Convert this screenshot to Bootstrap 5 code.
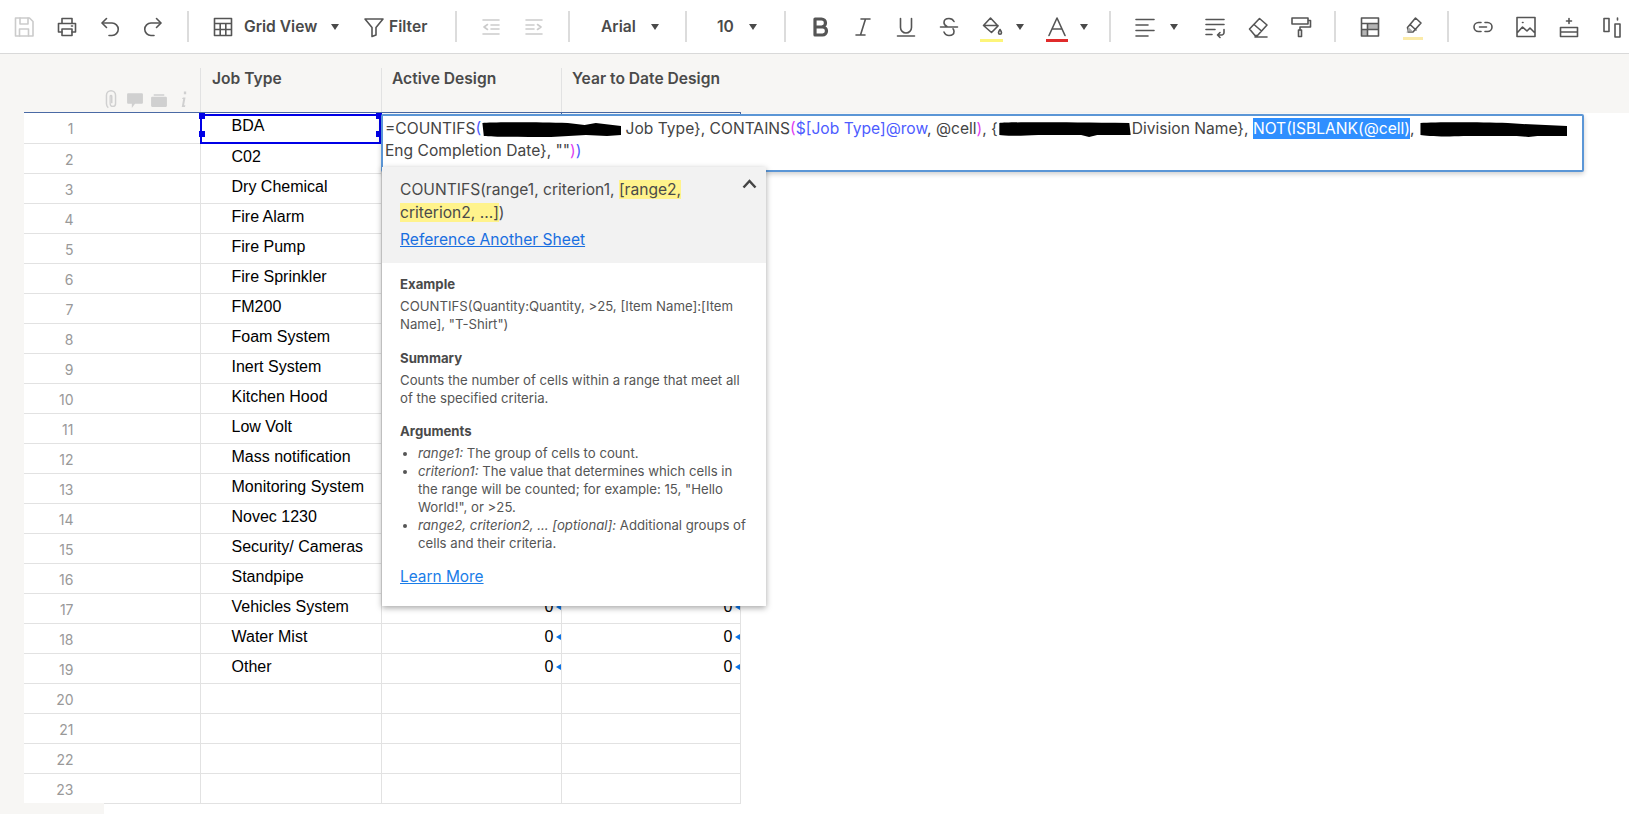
<!DOCTYPE html>
<html lang="en">
<head>
<meta charset="utf-8">
<title>Sheet</title>
<link href="https://cdn.jsdelivr.net/npm/bootstrap@5.3.0/dist/css/bootstrap.min.css" rel="stylesheet">
<style>
html,body{height:100%;overflow:hidden;background:#fff}
body{font-family:Inter,"Liberation Sans",sans-serif;color:#444}
.tbar{height:54px;padding-left:2px;border-bottom:1px solid #d9d9d9;background:#fff;overflow:hidden}
.tool{width:43px;flex:none;display:flex;align-items:center;justify-content:center}
.tool svg{width:24px;height:24px;fill:none;stroke:#555;stroke-width:1.6;stroke-linecap:round;stroke-linejoin:round;overflow:visible}
.tool.off svg{stroke:#cbcbcb}
.fw31{width:31px}
.sepr{width:2px;height:31px;background:#dcdcdc;flex:none}
.caretm{width:10px;height:10px;flex:none;display:flex;align-items:center;justify-content:center}
.caretm::before{content:"";border-left:4px solid transparent;border-right:4px solid transparent;border-top:6px solid #4a4a4a}
.lbl{flex:none;font-weight:600;font-size:15.6px;white-space:nowrap;color:#4a4a4a}
.w73{width:73px}.w39{width:39px}.w34{width:34px}.w17{width:17px}
.ml1{margin-left:1px}.ml2{margin-left:2px}.ml3{margin-left:3px}.ml10{margin-left:10px}.ml12{margin-left:12px}.ml13{margin-left:13px}.ml14{margin-left:14px}.ml15{margin-left:15px}.ml18{margin-left:18px}.ml20{margin-left:20px}.ml25{margin-left:25px}.ml26{margin-left:26px}.ml27{margin-left:27px}.ml30{margin-left:30px}.ml31{margin-left:31px}
.stage{height:760px;background:#fff;overflow:hidden}
.headband{background:#f7f6f4;height:59px}
.gutter{width:24px;background:#f7f6f4;flex:none}
.hcorner{width:176px;height:59px;position:relative;flex:none}
.hcol{width:181px;height:45px;margin-top:14px;padding:0 0 0 11px;border-left:1px solid #e2e2e2;font-weight:600;font-size:15.6px;color:#4a4a4a;flex:none}
.hcol2{width:180px;padding-left:10px}
.hlabel{height:22px;line-height:22px}
.hicons{position:absolute;right:8px;bottom:4px;display:flex;gap:6px;align-items:center}
.hicons svg{width:18px;height:19px;fill:#d0d0d0;stroke:none}
.hrule{position:absolute;left:24px;top:58px;width:717px;height:2px;background:#4a6aa5}
.sheet{table-layout:fixed;width:716px;margin:0;border-collapse:collapse}
.sheet td{height:30px;padding:0;border:0;border-bottom:1px solid #e2e2e2;border-left:1px solid #e2e2e2;background:#fff;font-family:"Liberation Sans",sans-serif;font-size:16px;color:#000;vertical-align:top;line-height:26px;position:relative}
.sheet td:first-child{border-left:0;padding:3px 126px 0 0;text-align:right;font-family:Inter,"Liberation Sans",sans-serif;color:#999;font-size:14px;line-height:26px}
.sheet td:last-child{border-right:1px solid #e2e2e2}
.sheet td.jt{padding-left:31px}
.sheet td.num{text-align:right;padding-right:7px}
.sheet td.tri::after{content:"";position:absolute;right:0;top:10px;border-top:3.5px solid transparent;border-bottom:3.5px solid transparent;border-right:5px solid #0b73e6}
.w176{width:176px}.w181{width:181px}.w180{width:180px}.w179{width:179px}
.foot-strip{height:11px;width:80px;background:#f7f6f4}
.gridwrap{height:690px}
.selcell{position:absolute;left:200px;top:60px;width:181px;height:30px;border:2px solid #0000e6}
.selcell i{position:absolute;width:6px;height:6px;background:#0000e6}
.h1{left:-3px;top:-3px}.h2{right:-3px;top:-3px}.h3{left:-3px;bottom:-3px}.h4{right:-3px;bottom:-3px}
.fbar{position:absolute;left:381px;top:60px;width:1203px;height:58px;background:#fff;border:2px solid #5b96d6;border-radius:2px;padding:2px 0 0 2px;font-family:Inter,"Liberation Sans",sans-serif;font-size:15.6px;color:#444;box-shadow:0 2px 5px rgba(0,0,0,.2)}
.fbar .ln{white-space:nowrap;height:22px;line-height:22px}
.scrib{display:inline-block;vertical-align:-3px;height:15px;fill:#000}
.s1{width:140px}.s2{width:134px}.s3{width:148px}
.pa{color:#4d5cff}.mg{color:#e13df0}
.hit{background:#2f8fff;color:#fff;display:inline-block;height:21px;line-height:21px}
.hintbox{position:absolute;left:382px;top:113px;width:384px;height:439px;background:#fff;box-shadow:0 2px 6px rgba(0,0,0,.35);font-family:Inter,"Liberation Sans",sans-serif;color:#555;z-index:2}
.hinthead{background:#f2f2f2;height:96px;padding:11px 30px 0 18px;font-size:15.6px;line-height:23px;position:relative;color:#4a4a4a}
.opt{background:#fff38c}
.chev{position:absolute;right:9px;top:12px;width:15px;height:10px;fill:none;stroke:#444;stroke-width:2.5}
.reflink{display:block;margin-top:4px;color:#1a6fe0;text-decoration:underline}
.hintbody{padding:12px 18px 0;font-size:13.2px;line-height:18px}
.ttl{font-weight:700;color:#4a4a4a;margin-top:15.5px;margin-bottom:4px}
.ttl.first{margin-top:0}
.hintbody ul{margin:0;padding-left:18px}
.learn{display:block;margin-top:14px;font-size:15.4px;line-height:22px;color:#1a7de8;text-decoration:underline}
</style>
</head>
<body>
<div class="tbar d-flex align-items-center">
  <span class="tool off"><svg viewBox="0 0 24 24"><path d="M3.500 3h14l3.500 3.500V21H3.500z"/><path d="M8 3v6h8V3M7.500 21v-7h9v7"/></svg></span>
  <span class="tool"><svg viewBox="0 0 24 24"><path d="M7 8V3.500h10V8"/><path d="M7 17H3.500V8.500h17V17H17"/><path d="M7 14h10v6.500H7z"/><path d="M16.500 11h1"/></svg></span>
  <span class="tool"><svg viewBox="0 0 24 24"><path d="M8.500 3.500 4 8l4.500 4.500"/><path d="M4.500 8H14a6 6 0 0 1 0 12.500h-3"/></svg></span>
  <span class="tool"><svg viewBox="0 0 24 24"><path d="M15.500 3.500 20 8l-4.500 4.500"/><path d="M19.500 8H10a6 6 0 0 0 0 12.500h3"/></svg></span>
  <span class="sepr ml13"></span>
  <span class="tool ml12"><svg viewBox="0 0 24 24"><path d="M3.500 3.500h17v17h-17zM3.500 8.500h17M3.500 14.500h17M9.200 8.500v12M14.800 8.500v12"/></svg></span>
  <span class="lbl w73">Grid View</span>
  <span class="caretm ml13"></span>
  <span class="tool fw31 ml18"><svg viewBox="0 0 24 24"><path d="M3 4h18l-7 8.500V20l-4 1.500v-9z"/></svg></span>
  <span class="lbl w39">Filter</span>
  <span class="sepr ml27"></span>
  <span class="tool off ml12"><svg viewBox="0 0 24 24"><path d="M4 5h16M12 10h8M12 14h8M4 19h16M8.500 9.500 5 12l3.500 2.500"/></svg></span>
  <span class="tool off"><svg viewBox="0 0 24 24"><path d="M4 5h16M4 10h8M4 14h8M4 19h16M15.500 9.500 19 12l-3.500 2.500"/></svg></span>
  <span class="sepr ml13"></span>
  <span class="lbl w34 ml31">Arial</span>
  <span class="caretm ml15"></span>
  <span class="sepr ml25"></span>
  <span class="lbl w17 ml30">10</span>
  <span class="caretm ml14"></span>
  <span class="sepr ml26"></span>
  <span class="tool ml12"><svg viewBox="0 0 24 24"><path stroke-width="3.200" d="M7 4h6.500a3.800 3.800 0 0 1 0 8H7zM7 12h7.500a4 4 0 0 1 0 8H7z"/></svg></span>
  <span class="tool"><svg viewBox="0 0 24 24"><path d="M10 4h9M5 20h9M14.500 4l-5 16"/></svg></span>
  <span class="tool"><svg viewBox="0 0 24 24"><path d="M6.500 3.500v9a5.500 5.500 0 0 0 11 0v-9M3.500 21h17"/></svg></span>
  <span class="tool"><svg viewBox="0 0 24 24"><path d="M3.500 12h17M17 6.500C16 4.500 14 3.500 12 3.500c-3 0-5 1.500-5 4 0 1.500 1 3 3 4M7 17c1 2.500 3 3.500 5 3.500 3 0 5-1.500 5-4 0-1-.4-2-1-2.700"/></svg></span>
  <span class="tool"><svg viewBox="0 0 24 24"><path d="M10.500 3 18 11l-6.500 6.500L3.500 10.500zM3.500 10.500h14.500"/><path d="M20 14.500c1 1.500 1.500 2.300 1.500 3.200a1.500 1.500 0 0 1-3 0c0-.9.500-1.700 1.500-3.200z"/><path stroke="#fdf57a" stroke-width="3" stroke-linecap="butt" d="M0 25.500h23"/></svg></span>
  <span class="caretm ml2"></span>
  <span class="tool ml10"><svg viewBox="0 0 24 24"><path d="M4 20.500 12 3l8 17.500M7 14h10"/><path stroke="#e02b2b" stroke-width="3" stroke-linecap="butt" d="M1 25.500h22"/></svg></span>
  <span class="caretm ml1"></span>
  <span class="sepr ml20"></span>
  <span class="tool ml12"><svg viewBox="0 0 24 24"><path d="M3 4.500h18M3 10h12M3 15.500h18M3 21h12"/></svg></span>
  <span class="caretm ml3"></span>
  <span class="tool ml14"><svg viewBox="0 0 24 24"><path d="M3 4.500h18M3 9.500h18M3 14.500h9M3 19.500h6M21 14.500v3a2.500 2.500 0 0 1-2.500 2.500H14.500M17 17.500 14.500 20l2.500 2.500"/></svg></span>
  <span class="tool"><svg viewBox="0 0 24 24"><path d="M3.500 14 13.500 3.500 21 10l-9.500 10.500H9zM8 9.500l7.500 6.500M9 22h12"/></svg></span>
  <span class="tool"><svg viewBox="0 0 24 24"><path d="M3 3h16v6H3zM19 5.500h2.500v6.500H11v3"/><path d="M9.500 15h3v6.500h-3z"/></svg></span>
  <span class="sepr ml12"></span>
  <span class="tool ml12"><svg viewBox="0 0 24 24"><path stroke="none" fill="#b5b5b5" d="M9.500 8.500h11v6h-11zM3.500 14.500h6v6h-6z"/><path d="M3.500 3h17v18h-17zM3.500 8.500h17M3.500 14.500h17M9.500 8.500V21"/></svg></span>
  <span class="tool"><svg viewBox="0 0 24 24"><path d="M14.500 3 20 8l-8 9H7.500l-1-4.500zM9 9.500l6 5.500"/><path stroke="none" fill="#aaa" d="M7.500 12 12 16.500H7.500l-1 1.500-1-.5z"/><path stroke="#fbeba9" stroke-width="3" stroke-linecap="butt" d="M2 23.500h20"/></svg></span>
  <span class="sepr ml13"></span>
  <span class="tool ml12"><svg viewBox="0 0 24 24"><path d="M10 7.500H7.500a4.500 4.500 0 0 0 0 9H10M14 7.500h2.500a4.500 4.500 0 0 1 0 9H14M8.500 12h7"/></svg></span>
  <span class="tool"><svg viewBox="0 0 24 24"><path d="M3 2.500h18v19H3zM3 18l5.500-6 4.500 4 3-3 5 5"/><path d="M8.500 7.500h.5"/></svg></span>
  <span class="tool"><svg viewBox="0 0 24 24"><path d="M3.500 12.500h17v9h-17zM3.500 17h17M12 3.500v5M9.500 6h5"/></svg></span>
  <span class="tool"><svg viewBox="0 0 24 24"><path d="M4 3.500h5v13H4zM15 9h5v13h-5zM17.500 3v2"/></svg></span>
</div>
<div class="stage position-relative">
  <div class="headband d-flex">
    <span class="gutter"></span>
    <div class="hcorner"><div class="hicons">
      <svg viewBox="0 0 16 18"><path d="M3 5a5 5 0 0 1 10 0v8a3.200 3.200 0 0 1-6.400 0V6a1.400 1.400 0 0 1 2.800 0v6.500H8V6.200h-.2V13a1.900 1.900 0 0 0 3.800 0V5a3.600 3.600 0 0 0-7.200 0v8a4.500 4.500 0 0 0 1.500 3.300l-1 1A5.800 5.800 0 0 1 3 13z"/></svg>
      <svg viewBox="0 0 16 18"><path d="M1.500 3h13a1 1 0 0 1 1 1v8a1 1 0 0 1-1 1H8l-3 4v-4H1.500a1 1 0 0 1-1-1V4a1 1 0 0 1 1-1z"/></svg>
      <svg viewBox="0 0 16 18"><path d="M1.500 6.500h13a1 1 0 0 1 1 1V15a1 1 0 0 1-1 1h-13a1 1 0 0 1-1-1V7.500a1 1 0 0 1 1-1zM3 4h10v1.500H3z"/></svg>
      <svg viewBox="0 0 16 18"><path d="M8.800 1.500h2.200v2.500H8.800zM8 7h2.400L9 14.500h1.200l-.3 1.500H6.800l1.400-7.500H7z"/></svg>
    </div></div>
    <div class="hcol"><div class="hlabel">Job Type</div></div>
    <div class="hcol hcol2"><div class="hlabel">Active Design</div></div>
    <div class="hcol hcol2"><div class="hlabel">Year to Date Design</div></div>
  </div>
  <span class="hrule"></span>
  <div class="d-flex gridwrap">
    <span class="gutter"></span>
    <table class="table sheet">
      <colgroup><col class="w176"><col class="w181"><col class="w180"><col class="w179"></colgroup>
      <tbody>
        <tr><td>1</td><td class="jt">BDA</td><td></td><td></td></tr>
        <tr><td>2</td><td class="jt">C02</td><td></td><td></td></tr>
        <tr><td>3</td><td class="jt">Dry Chemical</td><td></td><td></td></tr>
        <tr><td>4</td><td class="jt">Fire Alarm</td><td></td><td></td></tr>
        <tr><td>5</td><td class="jt">Fire Pump</td><td></td><td></td></tr>
        <tr><td>6</td><td class="jt">Fire Sprinkler</td><td></td><td></td></tr>
        <tr><td>7</td><td class="jt">FM200</td><td></td><td></td></tr>
        <tr><td>8</td><td class="jt">Foam System</td><td></td><td></td></tr>
        <tr><td>9</td><td class="jt">Inert System</td><td></td><td></td></tr>
        <tr><td>10</td><td class="jt">Kitchen Hood</td><td></td><td></td></tr>
        <tr><td>11</td><td class="jt">Low Volt</td><td></td><td></td></tr>
        <tr><td>12</td><td class="jt">Mass notification</td><td></td><td></td></tr>
        <tr><td>13</td><td class="jt">Monitoring System</td><td></td><td></td></tr>
        <tr><td>14</td><td class="jt">Novec 1230</td><td></td><td></td></tr>
        <tr><td>15</td><td class="jt">Security/ Cameras</td><td></td><td></td></tr>
        <tr><td>16</td><td class="jt">Standpipe</td><td></td><td></td></tr>
        <tr><td>17</td><td class="jt">Vehicles System</td><td class="num tri">0</td><td class="num tri">0</td></tr>
        <tr><td>18</td><td class="jt">Water Mist</td><td class="num tri">0</td><td class="num tri">0</td></tr>
        <tr><td>19</td><td class="jt">Other</td><td class="num tri">0</td><td class="num tri">0</td></tr>
        <tr><td>20</td><td></td><td></td><td></td></tr>
        <tr><td>21</td><td></td><td></td><td></td></tr>
        <tr><td>22</td><td></td><td></td><td></td></tr>
        <tr><td>23</td><td></td><td></td><td></td></tr>
      </tbody>
    </table>
  </div>
  <div class="d-flex"><span class="gutter"></span><span class="foot-strip"></span></div>
  <div class="selcell"><i class="h1"></i><i class="h2"></i><i class="h3"></i><i class="h4"></i></div>
  <div class="fbar">
    <div class="ln">=COUNTIFS<span class="pa">(</span><svg class="scrib s1" viewBox="0 0 100 15" preserveAspectRatio="none"><path d="M1 1C8 0 40 0 62 1l12 2 8-2 18 3v9l-10 1-15-1-25 2C30 15 8 15 2 14z"/></svg> Job Type}, CONTAINS<span class="mg">(</span><span class="pa">$[Job Type]@row</span>, @cell<span class="mg">)</span>, {<svg class="scrib s2" viewBox="0 0 100 15" preserveAspectRatio="none"><path d="M1 1C8 0 40 0 98 1l1 12-25 0-6 2-6-2H30C15 14 5 14 1 13z"/></svg>Division Name}, <span class="hit">NOT(ISBLANK(@cell)</span>, <svg class="scrib s3" viewBox="0 0 100 15" preserveAspectRatio="none"><path d="M1 1C10 0 40 0 60 1l10 1 30 2v10l-20 0-6 1-8-1H30C15 15 5 14 1 13z"/></svg></div>
    <div class="ln">Eng Completion Date}, ""<span class="mg">)</span><span class="pa">)</span></div>
  </div>
  <div class="hintbox">
    <div class="hinthead">
      <svg class="chev" viewBox="0 0 15 10"><path d="M1.500 8.500 7.500 2l6 6.500"/></svg>
      COUNTIFS(range1, criterion1, <span class="opt">[range2,<br>criterion2, ...]</span>)
      <a class="reflink" href="#">Reference Another Sheet</a>
    </div>
    <div class="hintbody">
      <div class="ttl first">Example</div>
      <div>COUNTIFS(Quantity:Quantity, &gt;25, [Item Name]:[Item Name], "T-Shirt")</div>
      <div class="ttl">Summary</div>
      <div>Counts the number of cells within a range that meet all of the specified criteria.</div>
      <div class="ttl">Arguments</div>
      <ul>
        <li><em>range1:</em> The group of cells to count.</li>
        <li><em>criterion1:</em> The value that determines which cells in the range will be counted; for example: 15, "Hello World!", or &gt;25.</li>
        <li><em>range2, criterion2, ... [optional]:</em> Additional groups of cells and their criteria.</li>
      </ul>
      <a class="learn" href="#">Learn More</a>
    </div>
  </div>
</div>
<script src="https://cdn.jsdelivr.net/npm/bootstrap@5.3.0/dist/js/bootstrap.bundle.min.js"></script>
</body>
</html>
